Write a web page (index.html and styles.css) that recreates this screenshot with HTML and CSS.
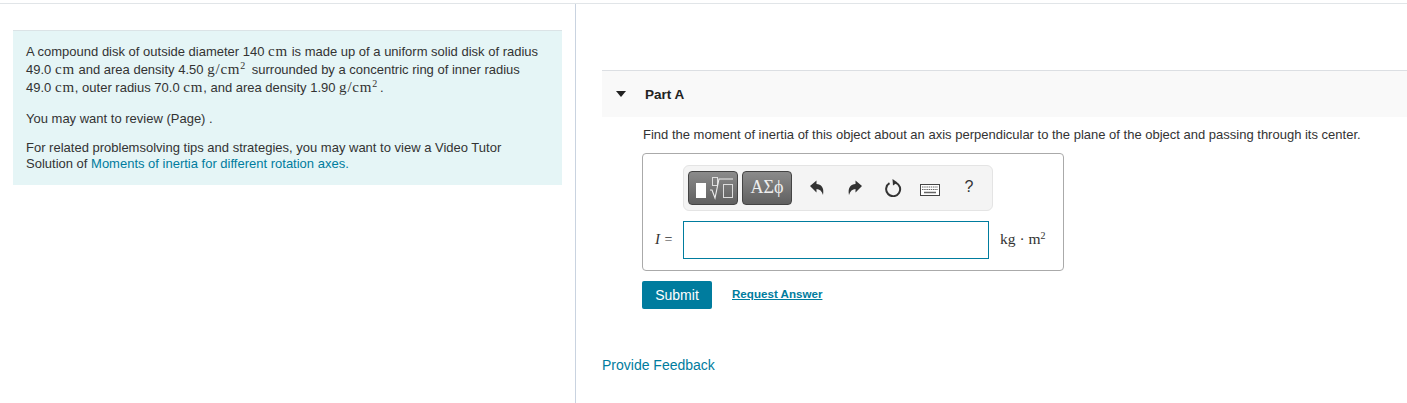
FILE: index.html
```html
<!DOCTYPE html>
<html lang="en">
<head>
<meta charset="utf-8">
<title>Part A</title>
<link rel="stylesheet" href="styles.css">
</head>
<body>
<div class="page">
  <aside class="left">
    <div class="note">
      <p>A compound disk of outside diameter 140 <span class="m">cm</span> is made up of a uniform solid disk of radius 49.0 <span class="m">cm</span> and area density 4.50 <span class="m">g/cm<sup>2</sup></span> surrounded by a concentric ring of inner radius 49.0 <span class="m">cm</span>, outer radius 70.0 <span class="m">cm</span>, and area density 1.90 <span class="m">g/cm<sup>2</sup></span>.</p>
      <p>You may want to review (Page) .</p>
      <p>For related problemsolving tips and strategies, you may want to view a Video Tutor Solution of <a href="#">Moments of inertia for different rotation axes.</a></p>
    </div>
  </aside>
  <main class="right">
    <div class="part-head">
      <span class="caret"></span>
      <span class="part-title">Part A</span>
    </div>
    <div class="part-body">
      <p class="question">Find the moment of inertia of this object about an axis perpendicular to the plane of the object and passing through its center.</p>
      <div class="answer">
        <div class="toolbar">
          <button class="tool-btn tmpl" type="button" aria-label="Templates">
            <svg width="48" height="32" viewBox="0 0 48 32">
              <rect x="7" y="11" width="10" height="15" fill="#fff"/>
              <rect x="23.500" y="5.500" width="5" height="8" fill="none" stroke="#ddd"/>
              <path d="M21 18h2l3 8 4-19h14" fill="none" stroke="#eee" stroke-width="1.100"/>
              <rect x="34.500" y="12.500" width="9" height="13" fill="none" stroke="#ddd"/>
            </svg>
          </button>
          <button class="tool-btn sym" type="button">ΑΣϕ</button>
          <span class="icon undo"><svg width="18" height="18" viewBox="0 0 18 18"><path d="M2 7 8.500 1.500v3.500c4.500 0 8 3.500 6.500 11-1-4-3.500-6-6.500-6v3.500z" fill="#333"/></svg></span>
          <span class="icon redo"><svg width="18" height="18" viewBox="0 0 18 18"><path d="M16 7 9.500 1.500v3.500c-4.500 0-8 3.500-6.500 11 1-4 3.500-6 6.500-6v3.500z" fill="#333"/></svg></span>
          <span class="icon reset"><svg width="18" height="18" viewBox="0 0 18 18"><path d="M5.500 4.200a7 7 0 1 0 6-.6" fill="none" stroke="#333" stroke-width="2"/><path d="M8.500 0l5 3.500-4.500 3z" fill="#333"/></svg></span>
          <span class="icon keys"><svg width="20" height="12" viewBox="0 0 20 12"><rect x=".5" y=".5" width="19" height="11" fill="#fff" stroke="#444"/><path d="M2 3h16M2 5.500h16" stroke="#666" stroke-width="1.200" stroke-dasharray="1.500 .7"/><path d="M4 8.500h12" stroke="#666" stroke-width="1.500"/></svg></span>
          <span class="icon help">?</span>
        </div>
        <div class="entry">
          <label class="var"><i>I</i> =</label>
          <input class="field" type="text" aria-label="I">
          <span class="unit">kg · m<sup>2</sup></span>
        </div>
      </div>
      <div class="actions">
        <button class="submit" type="button">Submit</button>
        <a class="request" href="#">Request Answer</a>
      </div>
    </div>
    <a class="feedback" href="#">Provide Feedback</a>
  </main>
</div>
</body>
</html>
```
FILE: styles.css
```css
* { box-sizing: border-box; }
html, body { margin: 0; padding: 0; background: #fff; }
body {
  height: 403px;
  overflow: hidden;
  padding-top: 3px;
  font-family: "Liberation Sans", Arial, sans-serif;
  font-size: 13px;
  color: #333;
}
a { color: #007c9e; text-decoration: none; }
p { margin: 0; }

.page {
  display: flex;
  height: 400px;
  border-top: 1px solid #e1e5e8;
}
.left {
  flex: 0 0 576px;
  padding: 26px 13px 0 13px;
  border-right: 1px solid #c9d3e0;
}
.note {
  height: 155px;
  padding: 12px 20px 0 13px;
  background: #e5f5f6;
  border-top: 1px solid #dbe3e6;
  line-height: 18px;
}
.note p { margin-bottom: 14px; }
.note p:nth-child(2) { line-height: 16px; margin-bottom: 13px; }
.note p:last-child { line-height: 16px; margin-bottom: 0; }
.m { font-family: "Liberation Serif", serif; font-size: 15px; line-height: 0; letter-spacing: .8px; }
.m sup { margin-right: 2px; }
sup { font-size: 10px; line-height: 0; vertical-align: 5px; }

.right { flex: 1; padding-top: 66px; min-width: 0; }
.part-head {
  display: flex;
  align-items: center;
  height: 47px;
  margin-left: 26px;
  background: #f9f9f9;
  border-top: 1px solid #dcdfe3;
}
.caret {
  width: 0;
  height: 0;
  margin-left: 14px;
  border-left: 5.500px solid transparent;
  border-right: 5.500px solid transparent;
  border-top: 6px solid #222;
}
.part-title { margin-left: 19px; font-weight: 700; font-size: 13.500px; color: #222; }

.part-body { margin-left: 67px; }
.question { margin-top: 10px; line-height: 16px; white-space: nowrap; }

.answer {
  width: 422px;
  height: 118px;
  margin-top: 10px;
  margin-left: -1px;
  border: 1px solid #aaa;
  border-radius: 4px;
  padding: 11px 0 0 40px;
}
.toolbar {
  display: flex;
  align-items: center;
  width: 310px;
  height: 46px;
  padding-left: 4px;
  background: #f4f4f4;
  border: 1px solid #e4e4e4;
  border-radius: 6px;
}
.tool-btn {
  height: 34px;
  padding: 0;
  border: 1px solid #444;
  border-radius: 4px;
  background: linear-gradient(#8b8b8b, #606060);
  color: #eee;
  font-family: "Liberation Serif", serif;
  font-size: 18px;
}
.tmpl { width: 50px; display: flex; align-items: center; justify-content: center; }
.sym { width: 50px; margin-left: 4px; padding-bottom: 2px; }
.icon { display: flex; align-items: center; justify-content: center; width: 18px; height: 18px; }
.undo { margin-left: 16px; }
.redo { margin-left: 20px; }
.reset { margin-left: 20px; }
.keys { width: 20px; margin-left: 18px; padding-top: 3px; }
.help { margin-left: 20px; padding-bottom: 2px; font-size: 16px; color: #333; }

.entry { display: flex; align-items: center; margin-top: 10px; margin-left: -28px; }
.var { width: 28px; padding-bottom: 2px; font-family: "Liberation Serif", serif; font-size: 14px; white-space: nowrap; }
.var i { font-size: 15px; margin-right: 1px; }
.field {
  width: 306px;
  height: 38px;
  margin: 0;
  border: 1px solid #007c9e;
  background: #fff;
  outline: none;
}
.unit { margin-left: 11px; padding-bottom: 2px; font-family: "Liberation Serif", serif; font-size: 15.500px; color: #333; white-space: nowrap; }

.actions { display: flex; align-items: center; margin-top: 10px; margin-left: -1px; }
.submit {
  width: 70px;
  height: 28px;
  border: 0;
  border-radius: 2px;
  background: #007c9e;
  color: #fff;
  font-family: "Liberation Sans", Arial, sans-serif;
  font-size: 14px;
}
.request { margin-left: 20px; margin-top: -4px; font-size: 11.600px; font-weight: 700; text-decoration: underline; }

.feedback { display: block; margin: 47px 0 0 26px; font-size: 14px; line-height: 18px; }
```
